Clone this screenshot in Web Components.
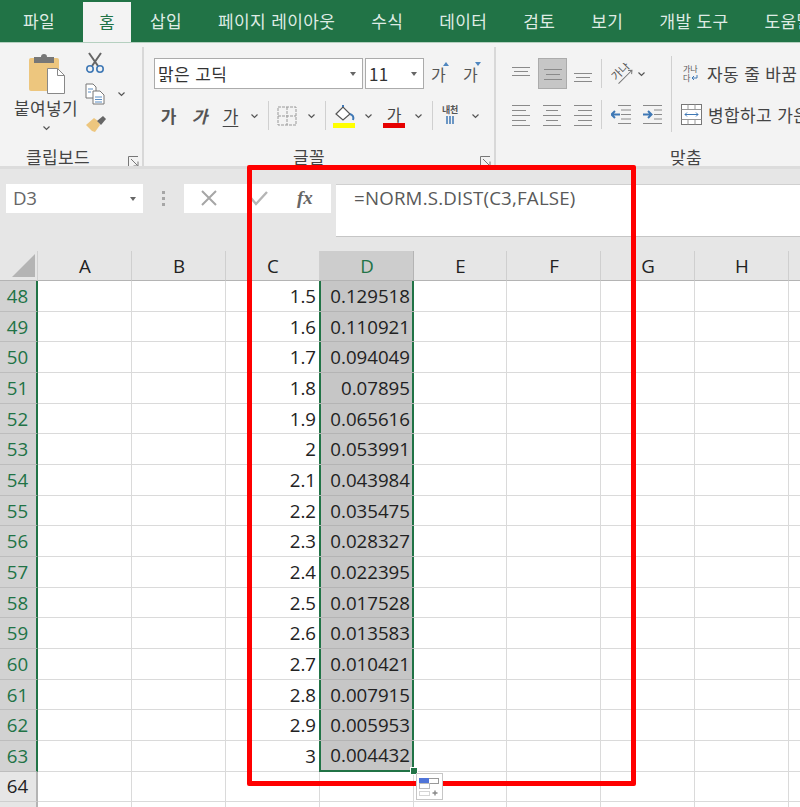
<!DOCTYPE html>
<html lang="ko">
<head>
<meta charset="utf-8">
<title>Excel</title>
<style>
  html, body { margin: 0; padding: 0; background: #fff; overflow: hidden; }
  body { width: 800px; height: 807px; position: relative; font-family: "Noto Sans CJK KR", "Noto Sans", sans-serif; }
</style>
</head>
<body>
<xl-tabs></xl-tabs>
<xl-ribbon></xl-ribbon>
<xl-formula-bar></xl-formula-bar>
<xl-sheet></xl-sheet>
<xl-highlight></xl-highlight>

<script>
const KR = `"Noto Sans CJK KR", "Noto Sans", sans-serif`;
const chev = (gap = 0) => `<svg class="chev" style="margin-left:${gap}px" width="9" height="6" viewBox="0 0 9 6"><path d="M1.5 1.500 4.500 4.500 7.500 1.500" fill="none" stroke="#555" stroke-width="1.200"/></svg>`;
const launcher = `<svg width="11" height="11" viewBox="0 0 11 11"><path d="M.5 10V.5H10M3 3l6.500 6.500M5.500 10H10V5.500" fill="none" stroke="#777"/></svg>`;

class XlTabs extends HTMLElement {
  constructor() {
    super();
    this.attachShadow({mode: 'open'});
  }
  connectedCallback() {
    const tabs = ['파일', '홈', '삽입', '페이지 레이아웃', '수식', '데이터', '검토', '보기', '개발 도구', '도움말'];
    this.shadowRoot.innerHTML = `
      <style>
        :host { display: flex; height: 43px; background: #217346; padding-left: 5px; overflow: hidden; box-sizing: border-box; border-bottom: 1px solid #b5d0c0; }
        div { padding: 0 18px; color: #dfebe4; font: 17px/42px ${KR}; letter-spacing: .37px; white-space: nowrap; flex: none; }
        .on { background: #f3f3f3; color: #217346; margin: 2px 1px 0 10px; padding: 0 16px; line-height: 40px; height: 41px; width: 16px; letter-spacing: 0; }
      </style>
      ${tabs.map(t => `<div class="${t === '홈' ? 'on' : ''}">${t}</div>`).join('')}`;
  }
}

// one group of the ribbon: content in the slot, caption and launcher on the bottom line
class XlGroup extends HTMLElement {
  constructor() {
    super();
    this.attachShadow({mode: 'open'});
  }
  connectedCallback() {
    const hasLauncher = this.hasAttribute('launcher');
    const capPad = this.getAttribute('cap-pad') || 0;
    this.shadowRoot.innerHTML = `
      <style>
        :host { display: flex; flex-direction: column; width: ${this.getAttribute('width')}px; flex: none; box-sizing: border-box; position: relative; height: 121px; border-right: 2px solid #d8d8d8; margin-top: 4px; }
        .body { flex: 1; min-height: 0; }
        .cap { height: 21px; padding-right: ${capPad}px; text-align: center; font: 17px/20px ${KR}; color: #444; letter-spacing: .37px; white-space: nowrap; }
        .lau { position: absolute; right: 3px; bottom: 1px; line-height: 0; }
      </style>
      <div class="body"><slot></slot></div>
      <div class="cap">${this.getAttribute('caption')}</div>
      ${hasLauncher ? `<div class="lau">${launcher}</div>` : ''}`;
  }
}

class XlClipboard extends HTMLElement {
  constructor() {
    super();
    this.attachShadow({mode: 'open'});
  }
  connectedCallback() {
    this.shadowRoot.innerHTML = `
      <style>
        :host { display: flex; padding: 6px 0 0 13px; color: #444; }
        .paste { width: 66px; display: flex; flex-direction: column; align-items: center; flex: none; }
        .paste svg:first-child { margin-left: 3px; }
        .paste span { font: 17px/20px ${KR}; letter-spacing: .37px; white-space: nowrap; margin-top: 3px; }
        .paste .chev { margin-top: 7px; }
        .small { display: flex; flex-direction: column; margin-left: 6px; gap: 9px; margin-top: -1px; }
        .row { display: flex; align-items: center; height: 22px; }
      </style>
      <div class="paste">
        <svg width="40" height="42" viewBox="0 0 40 42">
          <rect x="1" y="5" width="30" height="33" rx="2" fill="#edc67e"/>
          <path d="M6 4h7a3 3 0 0 1 6 0h7v6H6z" fill="#777"/>
          <path d="M19.500 40.500V15.500h10l7 7v18z" fill="#fff" stroke="#888"/>
          <path d="M29.500 15.500v7h7" fill="none" stroke="#888"/>
        </svg>
        <span>붙여넣기</span>
        ${chev()}
      </div>
      <div class="small">
        <div class="row">
          <svg width="20" height="22" viewBox="0 0 20 22"><path d="M4 1l9 13M16 1 7 14" stroke="#666" stroke-width="2" fill="none"/><circle cx="5" cy="17" r="3.200" fill="none" stroke="#3f78b5" stroke-width="1.600"/><circle cx="15" cy="17" r="3.200" fill="none" stroke="#3f78b5" stroke-width="1.600"/></svg>
        </div>
        <div class="row">
          <svg width="20" height="22" viewBox="0 0 20 22"><path d="M1 1h7l3 3v11H1z" fill="#fff" stroke="#777"/><path d="M8 8h7l4 4v9H8z" fill="#fff" stroke="#777"/><path d="M3 6h5M3 9h3M10 14h7M10 16.500h7M10 19h7" stroke="#5b8ec4"/></svg>
          ${chev(12)}
        </div>
        <div class="row">
          <svg width="22" height="20" viewBox="0 0 22 20"><path d="M13 6 9 3 1 10l6 6 3 1 5-7z" fill="#edc67e"/><path d="M12 6l6-5 3 3-5 6z" fill="#666"/></svg>
        </div>
      </div>`;
  }
}

class XlFontControls extends HTMLElement {
  constructor() {
    super();
    this.attachShadow({mode: 'open'});
  }
  connectedCallback() {
    const sep = (gap) => `<i class="sep" style="margin-left:${gap}px"></i>`;
    this.shadowRoot.innerHTML = `
      <style>
        :host { display: flex; flex-direction: column; padding: 11px 0 0 10px; color: #444; }
        .r1, .r2 { display: flex; align-items: center; }
        .r1 { height: 31px; }
        .r2 { height: 29px; margin-top: 12px; margin-left: -1px; }
        .box { height: 31px; box-sizing: border-box; background: #fff; border: 1px solid #ababab; display: flex; align-items: center; justify-content: space-between; padding: 0 6px 0 3px; font: 17px/20px ${KR}; letter-spacing: .37px; color: #333; flex: none; }
        .tri { width: 0; height: 0; border: 3.500px solid transparent; border-top: 4px solid #666; border-bottom: 0; }
        .grow { position: relative; font: 16px/20px ${KR}; width: 32px; color: #555; flex: none; }
        .grow b { position: absolute; top: -2px; left: 12px; width: 0; height: 0; border: 3.500px solid transparent; border-top: 0; border-bottom: 4px solid #4f86bf; }
        .grow b.dn { border-bottom: 0; border-top: 4px solid #4f86bf; }
        .k { font: 700 17px/20px ${KR}; color: #555; width: 31px; text-align: center; flex: none; }
        .sep { width: 1px; height: 29px; background: #d0d0d0; flex: none; }
        .chev, .icon { flex: none; }
        .red { width: 22px; height: 24px; text-align: center; position: relative; font: 16px/20px ${KR}; }
        .red span { position: absolute; left: 0; right: 0; bottom: 0; height: 5px; background: #e60000; }
        .pron { width: 18px; height: 22px; overflow: hidden; font: 700 9px/10px ${KR}; text-align: center; white-space: nowrap; letter-spacing: -.3px; color: #555; }
      </style>
      <div class="r1">
        <div class="box" style="width:209px;margin-right:2px">맑은 고딕<span class="tri"></span></div>
        <div class="box" style="width:59px;margin-right:7px">11<span class="tri"></span></div>
        <div class="grow">가<b></b></div>
        <div class="grow">가<b class="dn"></b></div>
      </div>
      <div class="r2">
        <div class="k">가</div>
        <div class="k" style="font-style:italic">가</div>
        <div class="k" style="text-decoration:underline;text-underline-offset:3px;font-weight:400;color:#444">가</div>
        ${chev(4)}
        ${sep(9)}
        <svg class="icon" style="margin-left:8px" width="20" height="20" viewBox="0 0 20 20"><path d="M1 1h18v18H1zM10 1v18M1 10h18" fill="none" stroke="#999" stroke-dasharray="3 1"/></svg>
        ${chev(10)}
        ${sep(9)}
        <svg class="icon" style="margin-left:7px" width="23" height="24" viewBox="0 0 23 24"><path d="M3 10l7-7 7 7-7 6z" fill="#fff" stroke="#555" stroke-width="1.200"/><path d="M10 3V1M17 10c3 1 4 3 3 6" fill="none" stroke="#3f78b5" stroke-width="2"/><rect y="19" width="22" height="5" fill="#ffff00"/></svg>
        ${chev(8)}
        <div class="icon red" style="margin-left:10px">가<span></span></div>
        ${chev(9)}
        ${sep(9)}
        <div class="icon pron" style="margin-left:8px">내천<svg style="display:block;margin:0 auto" width="10" height="10" viewBox="0 0 10 10"><path d="M2 1v8M5 1v8M8 1v8" stroke="#3f78b5" stroke-width="1.500"/></svg></div>
        ${chev(12)}
      </div>`;
  }
}

class XlAlignControls extends HTMLElement {
  constructor() {
    super();
    this.attachShadow({mode: 'open'});
  }
  connectedCallback() {
    // horizontal rules of an alignment icon
    const lines = (ws, y0, gap, align = 'c') => ws.map((w, i) => {
      const x = align === 'l' ? 0 : align === 'r' ? 18 - w : (18 - w) / 2;
      return `<path d="M${x} ${y0 + i * gap + .5}h${w}" stroke="#8a8a8a"/>`;
    }).join('');
    const ic = (inner, w = 18, h = 18, ml = 0) => `<svg style="margin-left:${ml}px;flex:none" width="${w}" height="${h}" viewBox="0 0 ${w} ${h}">${inner}</svg>`;
    const sep = `<i class="sep"></i>`;
    this.shadowRoot.innerHTML = `
      <style>
        :host { display: flex; flex-direction: column; padding: 11px 0 0 16px; color: #444; white-space: nowrap; }
        .r { display: flex; align-items: center; height: 31px; }
        .r + .r { margin-top: 10px; }
        .sel { width: 29px; height: 31px; background: #c6c6c6; border: 1px solid #ababab; box-sizing: border-box; display: flex; align-items: center; justify-content: center; flex: none; margin-left: 8px; }
        .sep { width: 1px; height: 29px; background: #d0d0d0; flex: none; margin-left: 9px; }
        .t { font: 17px/20px ${KR}; letter-spacing: .37px; color: #444; margin-left: 6px; }
        .tall { width: 1px; height: 76px; background: #d0d0d0; position: absolute; left: 175px; top: 9px; }
      </style>
      <i class="tall"></i>
      <div class="r">
        ${ic(lines([18, 14, 18], 2, 4))}
        <div class="sel">${ic(lines([18, 14, 18], 4, 5))}</div>
        ${ic(lines([18, 14, 18], 8, 4), 18, 18, 7)}
        ${sep}
        ${ic(`<g transform="rotate(-45 10 9)"><text x="0" y="12" font-size="11" fill="#555" font-family="Noto Sans CJK KR">가나</text><path d="M0 15.500h19M16 13l3 2.500-3 2.500" fill="none" stroke="#777"/></g>`, 22, 22, 9)}
        ${chev(4)}
        ${ic(`<text x="0" y="7" font-size="8" fill="#555" font-family="Noto Sans CJK KR">가나</text><text x="0" y="16" font-size="8" fill="#555" font-family="Noto Sans CJK KR">다</text><path d="M14 10v3H9M11 11l-2 2 2 2" fill="none" stroke="#3f78b5"/>`, 18, 18, 37)}
        <span class="t">자동 줄 바꿈</span>
      </div>
      <div class="r">
        ${ic(lines([18, 14, 18, 14, 18], 1, 5, 'l'), 18, 22)}
        ${ic(lines([18, 12, 18, 12, 18], 1, 5), 18, 22, 13)}
        ${ic(lines([18, 14, 18, 14, 18], 1, 5, 'r'), 18, 22, 13)}
        ${sep}
        ${ic(`<path d="M7 1.500h13M10 6h10M10 10.500h10M10 15h10M7 19.500h13" stroke="#8a8a8a"/><path d="M9 10.500H1M4 7 .5 10.500 4 14" fill="none" stroke="#3f78b5" stroke-width="2"/>`, 20, 21, 9)}
        ${ic(`<path d="M1 1.500h19M12 6h8M12 10.500h8M12 15h8M1 19.500h19" stroke="#8a8a8a"/><path d="M1 10.500h8M6 7l3.500 3.500L6 14" fill="none" stroke="#3f78b5" stroke-width="2"/>`, 20, 21, 11)}
        ${ic(`<rect x=".5" y=".5" width="20" height="20" fill="#fff" stroke="#777"/><path d="M.5 5.500h20M.5 15.500h20M7 .5v5M14 .5v5M7 15.500v5M14 15.500v5" stroke="#999"/><path d="M4 10.500h13M6 8.500l-2 2 2 2M15 8.500l2 2-2 2" fill="none" stroke="#3f78b5"/>`, 21, 21, 19)}
        <span class="t">병합하고 가운데 맞춤</span>
      </div>`;
  }
}

class XlRibbon extends HTMLElement {
  constructor() {
    super();
    this.attachShadow({mode: 'open'});
  }
  connectedCallback() {
    this.shadowRoot.innerHTML = `
      <style>
        :host { display: flex; height: 123px; background: #f3f3f3; overflow: hidden; border-bottom: 2px solid #dcdcdc; }
      </style>
      <xl-group width="144" caption="클립보드" cap-pad="26" launcher><xl-clipboard></xl-clipboard></xl-group>
      <xl-group width="352" caption="글꼴" cap-pad="20" launcher><xl-font-controls></xl-font-controls></xl-group>
      <xl-group width="380" caption="맞춤" style="border:0;position:relative"><xl-align-controls></xl-align-controls></xl-group>`;
  }
}

class XlFormulaBar extends HTMLElement {
  constructor() {
    super();
    this.attachShadow({mode: 'open'});
  }
  connectedCallback() {
    const field = `background: #fff; box-sizing: border-box; height: 29px;`;
    this.shadowRoot.innerHTML = `
      <style>
        :host { display: flex; height: 83px; background: #e6e6e6; padding: 15px 0 0 6px; box-sizing: border-box; align-items: flex-start; color: #666; border-top: 1px solid #dcdcdc; }
        .name { ${field} width: 137px; display: flex; align-items: center; justify-content: space-between; padding: 0 7px 2px; font: 18.700px/24px "Open Sans", sans-serif; letter-spacing: -.3px; }
        .tri { width: 0; height: 0; border: 3.500px solid transparent; border-top: 4px solid #666; border-bottom: 0; margin-top: 2px; }
        .dots { width: 41px; display: flex; flex-direction: column; align-items: center; justify-content: center; gap: 3px; height: 29px; flex: none; }
        .dots i { width: 3px; height: 3px; background: #a6a6a6; }
        .btns { ${field} width: 147px; position: relative; flex: none; }
        .btns svg, .btns span { position: absolute; }
        .input { background: #fff; height: 53px; flex: 1; box-sizing: border-box; margin-left: 5px; padding: 0 0 0 18px; font: 18.700px/26px "Open Sans", sans-serif; color: #595959; letter-spacing: .2px; border-top: 1px solid #d0d0d0; border-bottom: 1px solid #c6c6c6; }
      </style>
      <div class="name">D3<span class="tri"></span></div>
      <div class="dots"><i></i><i></i><i></i></div>
      <div class="btns">
        <svg style="left:17px;top:6px" width="16" height="16" viewBox="0 0 16 16"><path d="M1 1l14 14M15 1 1 15" stroke="#a6a6a6" stroke-width="2"/></svg>
        <svg style="left:66px;top:6px" width="18" height="16" viewBox="0 0 18 16"><path d="M1 8l5 6L17 2" fill="none" stroke="#b5b5b5" stroke-width="2.400"/></svg>
        <span style="left:113px;top:3px;font:italic 700 19px/22px 'Liberation Serif',serif;color:#666">fx</span>
      </div>
      <div class="input">=NORM.S.DIST(C3,FALSE)</div>`;
  }
}

class XlSheet extends HTMLElement {
  constructor() {
    super();
    this.attachShadow({mode: 'open'});
  }
  connectedCallback() {
    const cols = ['A', 'B', 'C', 'D', 'E', 'F', 'G', 'H', 'I'];
    const widths = [94, 94, 94, 94, 93, 94, 94, 94, 94];
    const data = [[48, '1.5', '0.129518'], [49, '1.6', '0.110921'], [50, '1.7', '0.094049'], [51, '1.8', '0.07895'],
      [52, '1.9', '0.065616'], [53, '2', '0.053991'], [54, '2.1', '0.043984'], [55, '2.2', '0.035475'],
      [56, '2.3', '0.028327'], [57, '2.4', '0.022395'], [58, '2.5', '0.017528'], [59, '2.6', '0.013583'],
      [60, '2.7', '0.010421'], [61, '2.8', '0.007915'], [62, '2.9', '0.005953'], [63, '3', '0.004432'],
      [64, '', ''], ['', '', '']];
    let cells = `<div class="corner"><i></i></div>`;
    cols.forEach(c => { cells += `<div class="ch${c === 'D' ? ' on' : ''}">${c}</div>`; });
    data.forEach(([n, c, d]) => {
      const sel = n && n <= 63;
      cells += `<div class="rh${sel ? ' sel' : ''}">${n}</div>`;
      cols.forEach(col => {
        const isD = col === 'D' && sel;
        const text = col === 'C' ? c : col === 'D' ? d : '';
        cells += `<div class="td${isD ? ' pick' : ''}${isD && n === 63 ? ' last' : ''}">${text}</div>`;
      });
    });
    this.shadowRoot.innerHTML = `
      <style>
        :host { display: grid; grid-template-columns: 38px ${widths.map(w => w + 'px').join(' ')}; grid-template-rows: 30px repeat(18, 30.667px); width: 800px; height: 556px; overflow: hidden; background: #fff; font: 18.700px/1 "Open Sans", sans-serif; color: #222; }
        div { box-sizing: border-box; }
        .corner { background: #e6e6e6; position: relative; border-right: 1px solid #d0d0d0; border-bottom: 1px solid #b4b4b4; }
        .corner i { position: absolute; right: 2px; bottom: 3px; width: 23px; height: 23px; background: #b4b4b4; clip-path: polygon(100% 0, 100% 100%, 0 100%); }
        .ch { background: #e6e6e6; display: flex; align-items: center; justify-content: center; border-right: 1px solid #cfcfcf; border-bottom: 1px solid #b4b4b4; color: #222; padding: 2px 0 0 1px; }
        .ch.on { background: #cdcdcd; color: #217346; border-right-color: #b4b4b4; }
        .rh { background: #e6e6e6; display: flex; align-items: center; justify-content: center; border-right: 2px solid #b4b4b4; border-bottom: 1px solid #cfcfcf; color: #222; padding: 1px 1px 0 0; }
        .rh.sel { color: #217346; border-right: 2px solid #217346; background: #d2d2d2; border-bottom-color: #bdbdbd; }
        .td { border-right: 1px solid #dadada; border-bottom: 1px solid #dadada; display: flex; align-items: center; justify-content: flex-end; padding: 1px 3px 0 0; }
        .pick { background: #c6c6c6; box-shadow: inset 2px 0 0 #217346, inset -2px 0 0 #217346; border-right: 0; border-bottom-color: #b4b4b4; margin-left: -1px; padding-right: 4px; }
        .last { border-bottom: 2px solid #217346; position: relative; overflow: visible; }
        .last::after { content: ""; position: absolute; right: -4px; bottom: -5px; width: 6px; height: 6px; background: #217346; border: 1px solid #fff; }
      </style>
      ${cells}`;
  }
}

class XlHighlight extends HTMLElement {
  constructor() {
    super();
    this.attachShadow({mode: 'open'});
  }
  connectedCallback() {
    this.shadowRoot.innerHTML = `
      <style>
        :host { display: block; position: absolute; inset: 0; pointer-events: none; }
        .box { position: absolute; left: 247px; top: 165px; width: 389px; height: 621px; border: 5px solid #ff0000; box-sizing: border-box; border-radius: 2px; }
        .quick { position: absolute; left: 416px; top: 773px; width: 27px; height: 27px; background: #fff; border: 1px solid #c6c6c6; box-sizing: border-box; }
        .quick svg { display: block; margin: 2px 0 0 2px; }
      </style>
      <div class="box"></div>
      <div class="quick"><svg width="22" height="22" viewBox="0 0 22 22"><rect x=".5" y="2.500" width="19" height="5" fill="#fff" stroke="#999"/><rect x="0" y="2" width="10" height="5" fill="#4f74d8"/><rect x=".5" y="7.500" width="10" height="5" fill="#fff" stroke="#bbb"/><rect x=".5" y="15.500" width="10" height="4" fill="none" stroke="#aaa" stroke-dasharray="1 1"/><path d="M13.500 17h5M16 14.500v5" stroke="#888" stroke-width="1.400"/></svg></div>`;
  }
}

customElements.define('xl-tabs', XlTabs);
customElements.define('xl-group', XlGroup);
customElements.define('xl-clipboard', XlClipboard);
customElements.define('xl-font-controls', XlFontControls);
customElements.define('xl-align-controls', XlAlignControls);
customElements.define('xl-ribbon', XlRibbon);
customElements.define('xl-formula-bar', XlFormulaBar);
customElements.define('xl-sheet', XlSheet);
customElements.define('xl-highlight', XlHighlight);
</script>
</body>
</html>
